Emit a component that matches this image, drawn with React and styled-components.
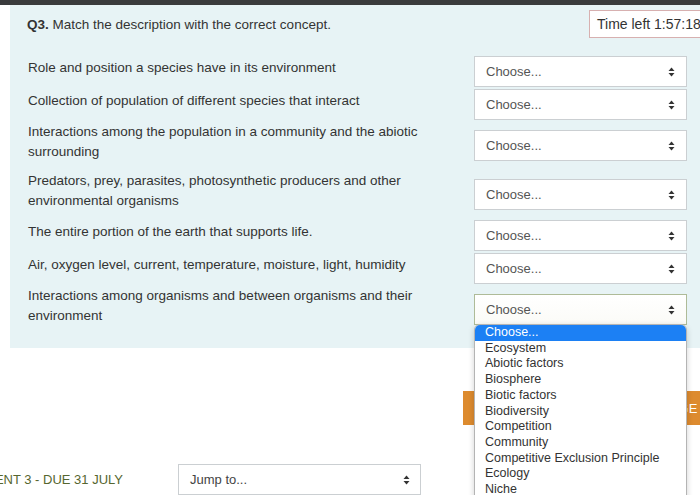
import React from 'react';
import styled, { createGlobalStyle, css } from 'styled-components';

const GlobalStyle = createGlobalStyle`
    html, body {
        margin: 0;
        padding: 0;
        background: #ffffff;
        overflow: hidden;
    }
    body {
        font-family: "Liberation Sans", Arial, sans-serif;
        color: #333333;
    }
`;

const rows = [
    { text: 'Role and position a species have in its environment' },
    { text: 'Collection of population of different species that interact' },
    { text: 'Interactions among the population in a community and the abiotic surrounding' },
    { text: 'Predators, prey, parasites, photosynthetic producers and other environmental organisms' },
    { text: 'The entire portion of the earth that supports life.' },
    { text: 'Air, oxygen level, current, temperature, moisture, light, humidity' },
    { text: 'Interactions among organisms and between organisms and their environment', open: true },
];

const options = [
    'Choose...',
    'Ecosystem',
    'Abiotic factors',
    'Biosphere',
    'Biotic factors',
    'Biodiversity',
    'Competition',
    'Community',
    'Competitive Exclusion Principle',
    'Ecology',
    'Niche',
];

function Arrows() {
    return (
        <svg width="7" height="10" viewBox="0 0 7 10">
            <path d="M3.5 0.5 L6.5 4 L0.5 4 Z" fill="#333" />
            <path d="M3.5 9.5 L6.5 6 L0.5 6 Z" fill="#333" />
        </svg>
    );
}

export default function App() {
    return (
        <>
            <GlobalStyle />
            <TopBar />
            <Timer>Time left 1:57:18</Timer>
            <Panel>
                <Title><b>Q3.</b> Match the description with the correct concept.</Title>
                <Table>
                    {rows.map((row, i) => (
                        <React.Fragment key={i}>
                            <Description>{row.text}</Description>
                            <SelectWrap>
                                <Select focused={row.open}>
                                    <span>Choose...</span>
                                    <Arrows />
                                </Select>
                                {row.open && (
                                    <OptionList>
                                        {options.map((opt, j) => (
                                            <Option key={opt} selected={j === 0}>{opt}</Option>
                                        ))}
                                    </OptionList>
                                )}
                            </SelectWrap>
                        </React.Fragment>
                    ))}
                </Table>
            </Panel>
            <ButtonRow>
                <NextButton>NEXT PAGE</NextButton>
            </ButtonRow>
            <NavRow>
                <PrevLink>
                    <span>ASSIGNMENT 3 - DUE 31 JULY</span>
                </PrevLink>
                <JumpSelect>
                    <span>Jump to...</span>
                    <Arrows />
                </JumpSelect>
            </NavRow>
        </>
    );
}

const TopBar = styled.div`
    height: 5px;
    background-color: #3a3b3c;
`;

const Timer = styled.div`
    position: fixed;
    top: 10px;
    left: 589px;
    height: 28px;
    width: 130px;
    box-sizing: border-box;
    padding: 0 7px;
    display: flex;
    align-items: center;
    background: #ffffff;
    border: 1px solid #d7b0b0;
    font-size: 14px;
    color: #333;
`;

const Panel = styled.div`
    margin-left: 10px;
    background-color: #e7f3f5;
    padding: 10px 13px 15px 18px;
`;

const Title = styled.div`
    font-size: 13.5px;
    line-height: 20px;
    margin-bottom: 21px;
    margin-left: -1px;
    color: #333;
    b {
        font-weight: bold;
    }
`;

const Table = styled.div`
    display: grid;
    grid-template-columns: 1fr 213px;
    column-gap: 16px;
    row-gap: 2px;
    align-items: center;
`;

const Description = styled.div`
    font-size: 13.5px;
    line-height: 20px;
    padding-bottom: 7px;
    color: #333;
    padding-right: 12px;
`;

const SelectWrap = styled.div`
    position: relative;
`;

const selectBox = css`
    height: 31px;
    box-sizing: border-box;
    display: flex;
    align-items: center;
    justify-content: space-between;
    padding: 0 11px 0 11px;
    background: #ffffff;
    border: 1px solid #cbcfd2;
    font-size: 13px;
    color: #555;
`;

const Select = styled.div`
    ${selectBox};
    ${props => props.focused && css`
        border-color: #aebb98;
        background: linear-gradient(#ffffff, #fbfbf7);
    `}
`;

const OptionList = styled.div`
    position: absolute;
    top: 30px;
    left: 0;
    width: 213px;
    box-sizing: border-box;
    background: #ffffff;
    border: 1px solid #b4b4b4;
    border-radius: 6px;
    box-shadow: 0 2px 6px rgba(0, 0, 0, 0.18);
    padding: 0 0 6px;
    z-index: 5;
`;

const Option = styled.div`
    font-size: 12.5px;
    line-height: 15.7px;
    padding-left: 10px;
    color: ${props => (props.selected ? '#ffffff' : '#333')};
    background: ${props => (props.selected ? '#1c80f4' : 'transparent')};
    border-radius: ${props => (props.selected ? '5px 5px 0 0' : '0')};
`;

const ButtonRow = styled.div`
    display: flex;
    justify-content: flex-end;
    margin-top: 43px;
`;

const NextButton = styled.div`
    width: 237px;
    height: 34px;
    box-sizing: border-box;
    display: flex;
    align-items: center;
    justify-content: flex-end;
    padding-right: 2px;
    background-color: #dd8b2f;
    color: #ffffff;
    font-size: 13px;
    letter-spacing: 0.5px;
`;

const NavRow = styled.div`
    display: flex;
    align-items: center;
    margin-top: 39px;
`;

const PrevLink = styled.div`
    width: 123px;
    display: flex;
    justify-content: flex-end;
    overflow: hidden;
    white-space: nowrap;
    font-size: 13px;
    color: #56662f;
    margin-right: 55px;
`;

const JumpSelect = styled.div`
    ${selectBox};
    width: 243px;
    color: #444;
    padding-right: 10px;
`;
